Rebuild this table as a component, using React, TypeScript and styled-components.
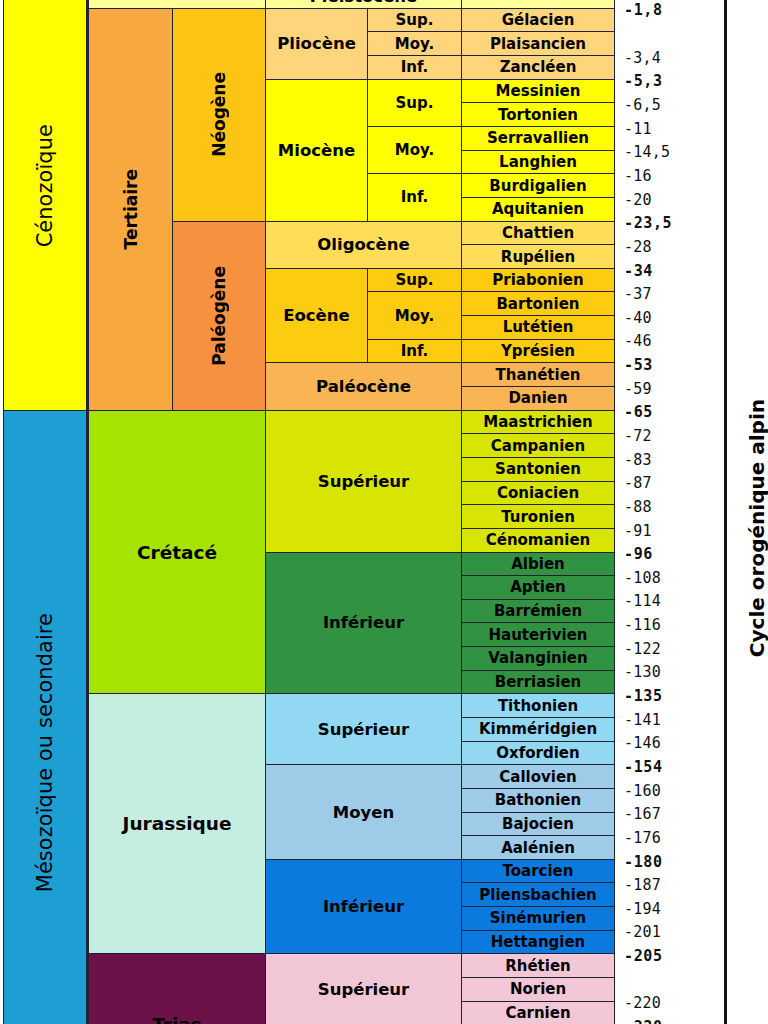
import React from "react";
import styled, { createGlobalStyle, css } from "styled-components";

const ROW = 23.65;
const LINE = "#1f2233";

const GlobalStyle = createGlobalStyle`
  html, body { margin: 0; padding: 0; background: #ffffff; overflow: hidden; }
  body { font-family: "DejaVu Sans", Verdana, sans-serif; color: #000; }
  #root { width: 768px; height: 1024px; overflow: hidden; }
`;

const C = {
  ceno: "#ffff00",
  meso: "#1e9fd3",
  quat: "#ffff99",
  tert: "#f7a83e",
  neo: "#fdc414",
  paleo: "#f6923f",
  plio: "#fed57b",
  mio: "#ffff00",
  oligo: "#fede58",
  eo: "#fdcb10",
  paleoc: "#f9b453",
  cret: "#a6e300",
  cretSup: "#d8e503",
  cretInf: "#319241",
  jur: "#c5ede0",
  jurSup: "#92d8f2",
  jurMoy: "#9ecbe8",
  jurInf: "#0a7ade",
  trias: "#6d1149",
  triasSup: "#f1c7d5",
  triasMoy: "#e6a3bd",
  triasInf: "#cf7fa3",
};

const Page = styled.main`
  display: flex;
  align-items: stretch;
  width: max-content;
  margin: -39.5px 0 0 3px;
`;

const Chart = styled.section`
  flex: none;
  display: grid;
  grid-template-columns: 84px 83px 92px 101px 93px 152px;
  grid-template-rows: repeat(48, ${ROW - 1}px);
  gap: 1px;
  padding: 1px;
  background: ${LINE};
`;

type Place = { $row: number; $span: number; $bg: string };

const cellBase = css<Place>`
  grid-row: ${(p) => `${p.$row + 1} / span ${p.$span}`};
  background: ${(p) => p.$bg};
  display: flex;
  align-items: center;
  justify-content: center;
  overflow: hidden;
`;

const EraCell = styled.div<Place>`
  ${cellBase};
  grid-column: 1;
  border-right: 2px solid ${LINE};
`;

const GroupCell = styled.div<Place & { $col: string }>`
  ${cellBase};
  grid-column: ${(p) => p.$col};
`;

const StageCell = styled.div<Place>`
  ${cellBase};
  grid-column: 6;
`;

const EraName = styled.span`
  writing-mode: vertical-rl;
  transform: rotate(180deg);
  font-size: 20.8px;
  font-weight: 400;
  letter-spacing: 0.15px;
  white-space: nowrap;
`;

const Name = styled.span<{ $size: number; $vertical?: boolean }>`
  font-size: ${(p) => p.$size}px;
  font-weight: 700;
  white-space: nowrap;
  ${(p) =>
    p.$vertical &&
    css`
      writing-mode: vertical-rl;
      transform: rotate(180deg);
    `}
`;

const StageName = styled.span`
  font-size: 15px;
  font-weight: 700;
  white-space: nowrap;
`;

const Scale = styled.div`
  flex: none;
  width: 109px;
  box-sizing: border-box;
  padding: 14.5px 0 0 9px;
  display: flex;
  flex-direction: column;
  background: #ffffff;
`;

const Tick = styled.div<{ $bold: boolean }>`
  flex: none;
  height: ${ROW}px;
  display: flex;
  align-items: center;
  font-family: "DejaVu Sans Mono", monospace;
  font-size: 15px;
  font-weight: ${(p) => (p.$bold ? 700 : 400)};
  letter-spacing: ${(p) => (p.$bold ? "0.6px" : "0.2px")};
  color: #111;
`;

const Rule = styled.div`
  flex: none;
  width: 3px;
  background: #111111;
`;

const Side = styled.div`
  flex: none;
  width: 60px;
  display: flex;
  align-items: center;
  justify-content: center;
`;

const SideLabel = styled.span`
  writing-mode: vertical-rl;
  transform: rotate(180deg);
  font-size: 20px;
  font-weight: 700;
  white-space: nowrap;
`;

type Era = { name: string; row: number; span: number; bg: string };
const eras: Era[] = [
  { name: "Cénozoïque", row: 0, span: 19, bg: C.ceno },
  { name: "Mésozoïque ou secondaire", row: 19, span: 29, bg: C.meso },
];

type Group = {
  name: string;
  row: number;
  span: number;
  bg: string;
  col: string;
  size: number;
  vertical?: boolean;
};

const groups: Group[] = [
  // sub-eras / periods
  { name: "Quaternaire", row: 0, span: 2, bg: C.quat, col: "2 / 4", size: 17 },
  { name: "Tertiaire", row: 2, span: 17, bg: C.tert, col: "2", size: 17, vertical: true },
  { name: "Néogène", row: 2, span: 9, bg: C.neo, col: "3", size: 17, vertical: true },
  { name: "Paléogène", row: 11, span: 8, bg: C.paleo, col: "3", size: 17, vertical: true },
  { name: "Crétacé", row: 19, span: 12, bg: C.cret, col: "2 / 4", size: 18.5 },
  { name: "Jurassique", row: 31, span: 11, bg: C.jur, col: "2 / 4", size: 18.5 },
  { name: "Trias", row: 42, span: 6, bg: C.trias, col: "2 / 4", size: 18.5 },
  // epochs
  { name: "Holocène", row: 0, span: 1, bg: C.quat, col: "4 / 6", size: 16.5 },
  { name: "Pleistocène", row: 1, span: 1, bg: C.quat, col: "4 / 6", size: 16.5 },
  { name: "Pliocène", row: 2, span: 3, bg: C.plio, col: "4", size: 16.5 },
  { name: "Miocène", row: 5, span: 6, bg: C.mio, col: "4", size: 16.5 },
  { name: "Oligocène", row: 11, span: 2, bg: C.oligo, col: "4 / 6", size: 16.5 },
  { name: "Eocène", row: 13, span: 4, bg: C.eo, col: "4", size: 16.5 },
  { name: "Paléocène", row: 17, span: 2, bg: C.paleoc, col: "4 / 6", size: 16.5 },
  { name: "Supérieur", row: 19, span: 6, bg: C.cretSup, col: "4 / 6", size: 16.5 },
  { name: "Inférieur", row: 25, span: 6, bg: C.cretInf, col: "4 / 6", size: 16.5 },
  { name: "Supérieur", row: 31, span: 3, bg: C.jurSup, col: "4 / 6", size: 16.5 },
  { name: "Moyen", row: 34, span: 4, bg: C.jurMoy, col: "4 / 6", size: 16.5 },
  { name: "Inférieur", row: 38, span: 4, bg: C.jurInf, col: "4 / 6", size: 16.5 },
  { name: "Supérieur", row: 42, span: 3, bg: C.triasSup, col: "4 / 6", size: 16.5 },
  { name: "Moyen", row: 45, span: 2, bg: C.triasMoy, col: "4 / 6", size: 16.5 },
  { name: "Inférieur", row: 47, span: 1, bg: C.triasInf, col: "4 / 6", size: 16.5 },
  // sub-epochs
  { name: "Sup.", row: 2, span: 1, bg: C.plio, col: "5", size: 15 },
  { name: "Moy.", row: 3, span: 1, bg: C.plio, col: "5", size: 15 },
  { name: "Inf.", row: 4, span: 1, bg: C.plio, col: "5", size: 15 },
  { name: "Sup.", row: 5, span: 2, bg: C.mio, col: "5", size: 15 },
  { name: "Moy.", row: 7, span: 2, bg: C.mio, col: "5", size: 15 },
  { name: "Inf.", row: 9, span: 2, bg: C.mio, col: "5", size: 15 },
  { name: "Sup.", row: 13, span: 1, bg: C.eo, col: "5", size: 15 },
  { name: "Moy.", row: 14, span: 2, bg: C.eo, col: "5", size: 15 },
  { name: "Inf.", row: 16, span: 1, bg: C.eo, col: "5", size: 15 },
];

const stages: [string, string][] = [
  ["", C.quat],
  ["", C.quat],
  ["Gélacien", C.plio],
  ["Plaisancien", C.plio],
  ["Zancléen", C.plio],
  ["Messinien", C.mio],
  ["Tortonien", C.mio],
  ["Serravallien", C.mio],
  ["Langhien", C.mio],
  ["Burdigalien", C.mio],
  ["Aquitanien", C.mio],
  ["Chattien", C.oligo],
  ["Rupélien", C.oligo],
  ["Priabonien", C.eo],
  ["Bartonien", C.eo],
  ["Lutétien", C.eo],
  ["Yprésien", C.eo],
  ["Thanétien", C.paleoc],
  ["Danien", C.paleoc],
  ["Maastrichien", C.cretSup],
  ["Campanien", C.cretSup],
  ["Santonien", C.cretSup],
  ["Coniacien", C.cretSup],
  ["Turonien", C.cretSup],
  ["Cénomanien", C.cretSup],
  ["Albien", C.cretInf],
  ["Aptien", C.cretInf],
  ["Barrémien", C.cretInf],
  ["Hauterivien", C.cretInf],
  ["Valanginien", C.cretInf],
  ["Berriasien", C.cretInf],
  ["Tithonien", C.jurSup],
  ["Kimméridgien", C.jurSup],
  ["Oxfordien", C.jurSup],
  ["Callovien", C.jurMoy],
  ["Bathonien", C.jurMoy],
  ["Bajocien", C.jurMoy],
  ["Aalénien", C.jurMoy],
  ["Toarcien", C.jurInf],
  ["Pliensbachien", C.jurInf],
  ["Sinémurien", C.jurInf],
  ["Hettangien", C.jurInf],
  ["Rhétien", C.triasSup],
  ["Norien", C.triasSup],
  ["Carnien", C.triasSup],
  ["Ladinien", C.triasMoy],
  ["Anisien", C.triasMoy],
  ["Scythien", C.triasInf],
];

// boundary ages, from the boundary below row 0 downward
const ticks: [string, boolean][] = [
  ["", false],
  ["-1,8", true],
  ["", false],
  ["-3,4", false],
  ["-5,3", true],
  ["-6,5", false],
  ["-11", false],
  ["-14,5", false],
  ["-16", false],
  ["-20", false],
  ["-23,5", true],
  ["-28", false],
  ["-34", true],
  ["-37", false],
  ["-40", false],
  ["-46", false],
  ["-53", true],
  ["-59", false],
  ["-65", true],
  ["-72", false],
  ["-83", false],
  ["-87", false],
  ["-88", false],
  ["-91", false],
  ["-96", true],
  ["-108", false],
  ["-114", false],
  ["-116", false],
  ["-122", false],
  ["-130", false],
  ["-135", true],
  ["-141", false],
  ["-146", false],
  ["-154", true],
  ["-160", false],
  ["-167", false],
  ["-176", false],
  ["-180", true],
  ["-187", false],
  ["-194", false],
  ["-201", false],
  ["-205", true],
  ["", false],
  ["-220", false],
  ["-230", true],
  ["-235", false],
  ["-240", false],
];

export default function App() {
  return (
    <>
      <GlobalStyle />
      <Page>
        <Chart>
          {eras.map((e) => (
            <EraCell key={e.name} $row={e.row} $span={e.span} $bg={e.bg}>
              <EraName>{e.name}</EraName>
            </EraCell>
          ))}
          {groups.map((g, i) => (
            <GroupCell key={i} $row={g.row} $span={g.span} $bg={g.bg} $col={g.col}>
              <Name $size={g.size} $vertical={g.vertical}>
                {g.name}
              </Name>
            </GroupCell>
          ))}
          {stages.map(([name, bg], i) => (
            <StageCell key={i} $row={i} $span={1} $bg={bg}>
              <StageName>{name}</StageName>
            </StageCell>
          ))}
        </Chart>
        <Scale>
          {ticks.map(([label, bold], i) => (
            <Tick key={i} $bold={bold}>
              {label}
            </Tick>
          ))}
        </Scale>
        <Rule />
        <Side>
          <SideLabel>Cycle orogénique alpin</SideLabel>
        </Side>
      </Page>
    </>
  );
}
